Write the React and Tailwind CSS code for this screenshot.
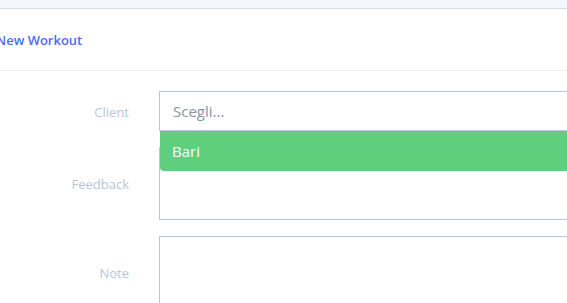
export default function App() {
  return (
    <div
      className="w-[567px] h-[303px] overflow-hidden bg-white"
      style={{ fontFamily: '"Open Sans", "Noto Sans", sans-serif' }}
    >
      <div className="h-[9px] bg-[#f4f7fd] border-b border-[#d5dde9]" />
      <div className="h-[62px] flex items-center border-b border-[#eceef1]">
        <span className="-ml-[4px] pt-[2px] text-[13px] font-semibold text-[#4b6cf6]">New Workout</span>
      </div>
      <div className="pt-[20px] flex flex-col gap-[16px]">
        <div className="flex items-center">
          <label className="w-[129px] shrink-0 pt-[3px] text-right text-[13px] text-[#b9c4db]">Client</label>
          <div className="relative ml-[30px] w-[460px] shrink-0">
            <div className="h-[40px] border border-[#bac5d9] flex items-center px-[13px] text-[15px] text-[#8a93a5]">
              Scegli...
            </div>
            <div className="absolute left-[1px] right-0 top-[40px] h-[40px] z-10 bg-[#5fcf7d] rounded-bl-[4px] flex items-center px-[12px] text-[15px] text-white">
              Bari
            </div>
          </div>
        </div>
        <div className="flex items-center">
          <label className="w-[129px] shrink-0 pt-[2px] text-right text-[13px] text-[#b9c4db]">Feedback</label>
          <textarea className="ml-[30px] w-[460px] h-[73px] shrink-0 border border-[#bac5d9] outline-none resize-none" />
        </div>
        <div className="flex items-center">
          <label className="w-[129px] shrink-0 pt-[2px] text-right text-[13px] text-[#b9c4db]">Note</label>
          <textarea className="ml-[30px] w-[460px] h-[73px] shrink-0 border border-[#bac5d9] outline-none resize-none" />
        </div>
      </div>
    </div>
  );
}
